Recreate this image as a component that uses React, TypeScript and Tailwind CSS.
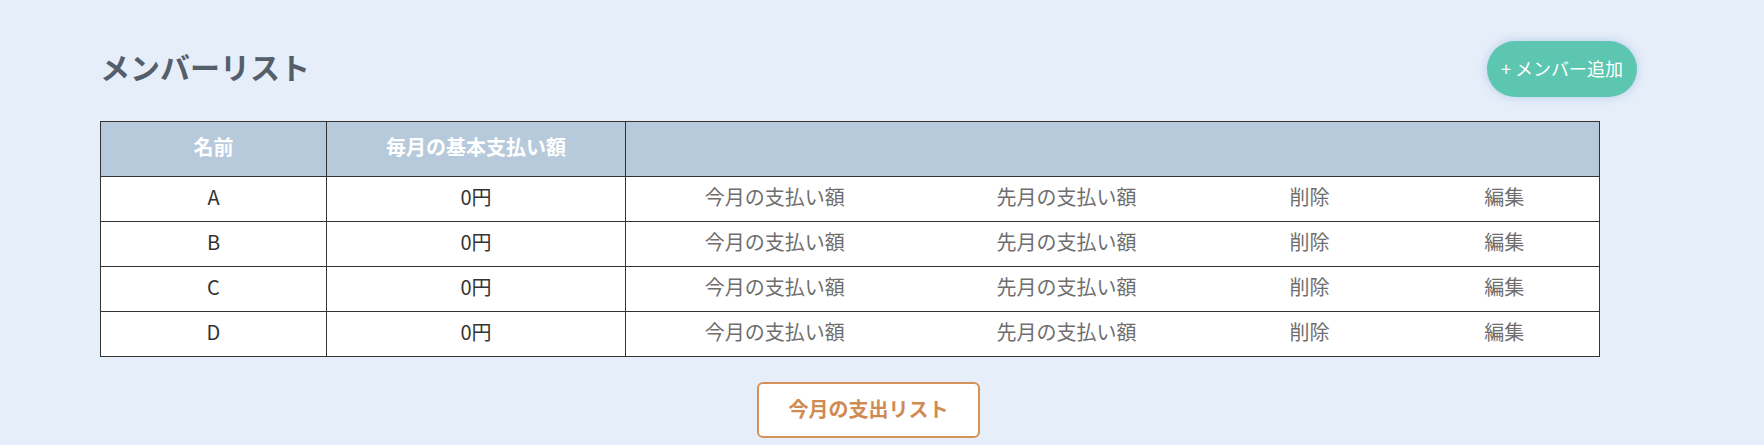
import React from "react";

const members = ["A", "B", "C", "D"];

export default function App() {
  return (
    <div className="min-h-screen w-full bg-[#e6eef9] font-['Noto_Sans_CJK_JP','Noto_Sans',sans-serif]">
      <div className="ml-[100px] w-[1537px] pt-[41px]">
        {/* Header */}
        <div className="flex items-center justify-between">
          <h1 className="pb-[6px] text-[30px] font-bold leading-none text-[#555e6b]">
            メンバーリスト
          </h1>
          <button className="flex h-[56px] w-[150px] items-center justify-center rounded-full bg-[#5cc6b0] pb-[1px] text-[18px] text-white shadow-[0_0_10px_rgba(170,195,230,0.8)]">
            +&nbsp;メンバー追加
          </button>
        </div>

        {/* Table */}
        <table className="mt-[24px] w-[1499px] table-fixed border-collapse border border-[#333] bg-white">
          <colgroup>
            <col className="w-[226px]" />
            <col className="w-[299px]" />
            <col className="w-[298px]" />
            <col className="w-[286px]" />
            <col className="w-[200px]" />
            <col className="w-[190px]" />
          </colgroup>
          <thead>
            <tr className="h-[55px] bg-[#b7cadb] text-[20px] font-bold leading-none text-white">
              <th className="border border-[#333] pb-[4px]">名前</th>
              <th className="border border-[#333] pb-[4px]">毎月の基本支払い額</th>
              <th className="border border-[#333]" colSpan={4}></th>
            </tr>
          </thead>
          <tbody>
            {members.map((m) => (
              <tr key={m} className="h-[45px] border-t border-[#333] text-center text-[20px] leading-none">
                <td className="border-r border-[#333] pb-[4px] text-[#333]">{m}</td>
                <td className="border-r border-[#333] pb-[4px] text-[#333]">0円</td>
                <td className="pb-[4px] text-[#6e6e6e]">今月の支払い額</td>
                <td className="pb-[4px] text-[#6e6e6e]">先月の支払い額</td>
                <td className="pb-[4px] text-[#6e6e6e]">削除</td>
                <td className="pb-[4px] text-[#6e6e6e]">編集</td>
              </tr>
            ))}
          </tbody>
        </table>

        {/* Footer button */}
        <div className="mt-[25px] flex justify-center">
          <button className="flex h-[56px] w-[223px] items-center justify-center rounded-[6px] border-2 border-[#d4915a] bg-white pb-[2px] text-[20px] font-bold text-[#d08a53]">
            今月の支出リスト
          </button>
        </div>
      </div>
    </div>
  );
}
